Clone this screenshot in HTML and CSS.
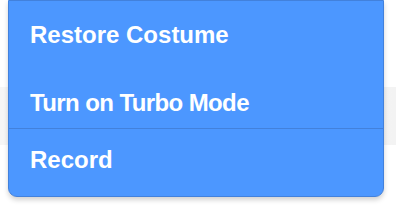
FILE: index.html
```html
<!DOCTYPE html>
<html lang="en">
<head>
    <meta charset="UTF-8">
    <title>Menu</title>
    <link rel="stylesheet" href="styles.css">
</head>
<body>
<div class="page">
    <div class="band"></div>

    <ul class="menu">
        <li class="menu-item">Restore Costume</li>
        <li class="menu-item turbo">Turn on Turbo Mode</li>
        <li class="menu-item record">Record</li>
    </ul>
</div>
</body>
</html>
```

FILE: styles.css
```css
body { margin: 0; background-color: #fff; font-family: "Liberation Sans", Arial, sans-serif; }
.page { position: relative; width: 396px; height: 205px; overflow: hidden; }
.band { margin-top: 87px; height: 58px; background: linear-gradient(to right, #f6f6f6, #fafafa 30%, #f3f3f3); }
.menu { position: absolute; left: 8px; top: 0; width: 374px; margin: 0; padding: 0; list-style: none; background-color: #4c97ff; border: 1px solid #4281dc; border-radius: 0 0 9px 9px; box-shadow: 0 3px 5px rgba(0,0,0,0.18); }
.menu-item { padding: 20px 21px; color: #fff; font-size: 24px; font-weight: bold; line-height: 28px; }
.turbo { padding-bottom: 11px; letter-spacing: -0.6px; }
.record { border-top: 1px solid #4281dc; padding-top: 17px; padding-bottom: 22px; }
```
